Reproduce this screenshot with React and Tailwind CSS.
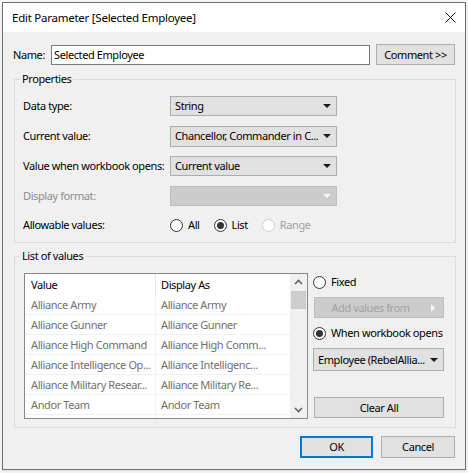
import React from "react";

const FONT = { fontFamily: '"Noto Sans", "Open Sans", sans-serif' };

function Caret({ disabled }) {
  return (
    <svg width="8" height="4" viewBox="0 0 8 4" className="shrink-0">
      <path d="M0 0 H8 L4 4 Z" fill={disabled ? "#f4f4f4" : "#1a1a1a"} />
    </svg>
  );
}

function Select({ value, disabled, className = "" }) {
  return (
    <div
      className={
        "flex items-center justify-between border pl-[4px] pr-[5px] " +
        (disabled ? "bg-[#cccccc] border-[#bfbfbf] " : "bg-[#e1e1e1] border-[#adadad] ") +
        className
      }
    >
      <span className="whitespace-nowrap overflow-hidden">{value}</span>
      <Caret disabled={disabled} />
    </div>
  );
}

function Radio({ checked, disabled, label }) {
  return (
    <div className={"flex items-center gap-[5px] whitespace-nowrap " + (disabled ? "text-[#a0a0a0]" : "text-black")}>
      <span
        className={
          "w-[13px] h-[13px] shrink-0 rounded-full border bg-white flex items-center justify-center " +
          (disabled ? "border-[#cfcfcf]" : "border-[#333333]")
        }
      >
        {checked && <span className="w-[7px] h-[7px] rounded-full bg-[#333333]" />}
      </span>
      <span>{label}</span>
    </div>
  );
}

const rows = [
  ["Alliance Army", "Alliance Army"],
  ["Alliance Gunner", "Alliance Gunner"],
  ["Alliance High Command", "Alliance High Comm..."],
  ["Alliance Intelligence Op...", "Alliance Intelligenc..."],
  ["Alliance Military Resear...", "Alliance Military Re..."],
  ["Andor Team", "Andor Team"],
  ["", ""],
];

export default function App() {
  return (
    <div
      className="w-[468px] h-[473px] bg-[#f7f7f7] pl-[2px] pt-[2px] text-[11px] leading-[16px] tracking-[-0.4px] text-black"
      style={FONT}
    >
      <div className="w-[464px] h-[468px] border border-[#707070] bg-[#f0f0f0] flex flex-col shadow-[0_1px_3px_rgba(0,0,0,0.12)]">
        {/* title bar */}
        <div className="h-[29px] bg-white flex items-center justify-between pl-[9px] pr-[8px] shrink-0">
          <span className="text-[11.5px] tracking-[-0.25px]">Edit Parameter [Selected Employee]</span>
          <svg width="11" height="11" viewBox="0 0 11 11" className="mr-[1px]">
            <path d="M0.5 0.5 L10.5 10.5 M10.5 0.5 L0.5 10.5" stroke="#111" strokeWidth="1" />
          </svg>
        </div>

        {/* name row */}
        <div className="flex items-center mt-[12px] pl-[10px]">
          <span className="w-[38px]">Name:</span>
          <div className="w-[319px] h-[20px] bg-white border border-[#7a7a7a] flex items-center pl-[2px]">
            Selected Employee
          </div>
          <div className="ml-[6px] w-[79px] h-[21px] bg-[#e1e1e1] border border-[#adadad] flex items-center justify-center">
            Comment &gt;&gt;
          </div>
        </div>

        {/* properties */}
        <fieldset className="ml-[11px] mt-[6px] w-[442px] border border-[#dcdcdc] pl-[8px] pb-[7px]">
          <legend className="-ml-[3px] px-[2px]">Properties</legend>
          <div className="flex flex-col gap-[10px] mt-[9px]">
            <div className="flex items-center h-[20px]">
              <span className="w-[147px]">Data type:</span>
              <Select value="String" className="w-[167px] h-[20px]" />
            </div>
            <div className="flex items-center h-[20px]">
              <span className="w-[147px]">Current value:</span>
              <Select value="Chancellor, Commander in C..." className="w-[167px] h-[21px]" />
            </div>
            <div className="flex items-center h-[20px]">
              <span className="w-[147px] whitespace-nowrap">Value when workbook opens:</span>
              <Select value="Current value" className="w-[167px] h-[20px]" />
            </div>
            <div className="flex items-center h-[20px]">
              <span className="w-[147px] text-[#8d8d8d]">Display format:</span>
              <Select value="" disabled className="w-[167px] h-[20px]" />
            </div>
            <div className="flex items-center h-[20px] -mt-[1px]">
              <span className="w-[147px]">Allowable values:</span>
              <div className="flex items-center gap-[14px]">
                <Radio label="All" />
                <Radio label="List" checked />
                <Radio label="Range" disabled />
              </div>
            </div>
          </div>
        </fieldset>

        {/* list of values */}
        <fieldset className="ml-[11px] mt-[5px] w-[442px] border border-[#dcdcdc] pl-[9px] pb-[8px]">
          <legend className="-ml-[4px] px-[2px]">List of values</legend>
          <div className="flex mt-[9px]">
            <div className="w-[284px] h-[146px] border border-[#828790] bg-white flex overflow-hidden">
              <div className="flex-1 flex flex-col">
                <div className="flex h-[21px] shrink-0 items-center">
                  <div className="w-[131px] pl-[6px] border-r border-[#e5e5e5] h-full flex items-center">Value</div>
                  <div className="w-[132px] pl-[5px] h-full flex items-center">Display As</div>
                </div>
                {rows.map((r, i) => (
                  <div key={i} className="flex h-[20px] shrink-0 border-b border-[#f0f0f0] text-[#6f6f6f]">
                    <div className="w-[131px] pl-[6px] border-r border-[#f0f0f0] flex items-center whitespace-nowrap overflow-hidden">{r[0]}</div>
                    <div className="w-[132px] pl-[5px] flex items-center whitespace-nowrap overflow-hidden">{r[1]}</div>
                  </div>
                ))}
              </div>
              {/* scrollbar */}
              <div className="w-[17px] bg-[#f0f0f0] flex flex-col items-center">
                <svg width="17" height="17" viewBox="0 0 17 17" className="shrink-0">
                  <path d="M5 10 L8.5 6.5 L12 10" stroke="#606060" strokeWidth="1.6" fill="none" />
                </svg>
                <div className="w-[15px] h-[18px] bg-[#cdcdcd]" />
                <div className="flex-1" />
                <svg width="17" height="17" viewBox="0 0 17 17" className="shrink-0">
                  <path d="M5 7 L8.5 10.5 L12 7" stroke="#606060" strokeWidth="1.6" fill="none" />
                </svg>
              </div>
            </div>

            <div className="ml-[5px] w-[131px] flex flex-col">
              <div className="h-[20px] flex items-center -mt-[1px]">
                <Radio label="Fixed" />
              </div>
              <div className="mt-[5px] ml-[1px] w-[130px] h-[21px] bg-[#cccccc] border border-[#bfbfbf] flex items-center justify-center relative text-[#a2a2a2]">
                <span className="mr-[17px]">Add values from</span>
                <svg width="4" height="8" viewBox="0 0 4 8" className="absolute right-[8px] top-[6px]">
                  <path d="M0 0 L4 4 L0 8 Z" fill="#f4f4f4" />
                </svg>
              </div>
              <div className="h-[20px] flex items-center mt-[5px]">
                <Radio label="When workbook opens" checked />
              </div>
              <Select value="Employee (RebelAllia..." className="mt-[5px] w-[131px] h-[23px]" />
              <div className="mt-[26px] ml-[1px] w-[130px] h-[21px] bg-[#e1e1e1] border border-[#adadad] flex items-center justify-center">
                Clear All
              </div>
            </div>
          </div>
        </fieldset>

        {/* dialog buttons */}
        <div className="flex justify-end mt-[8px] pr-[10px] gap-[8px]">
          <div className="w-[73px] h-[22px] bg-[#e1e1e1] border-2 border-[#0078d7] flex items-center justify-center">OK</div>
          <div className="w-[74px] h-[22px] bg-[#e1e1e1] border border-[#adadad] flex items-center justify-center">Cancel</div>
        </div>
      </div>
    </div>
  );
}
